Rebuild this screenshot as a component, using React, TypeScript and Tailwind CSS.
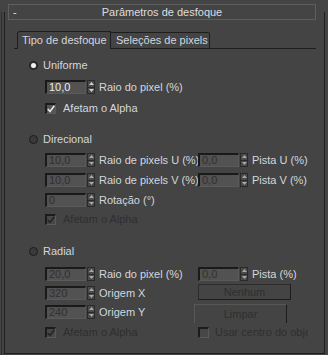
import React from "react";

const FONT = { fontFamily: '"Liberation Sans", Arial, sans-serif' };

function Spinner({ disabled }: { disabled?: boolean }) {
  const c = disabled ? "#a8a8a8" : "#d0d0d0";
  return (
    <div className="flex h-[14px] w-[8px] flex-col border border-[#2a2a2a] bg-[#4a4a4a]">
      <div className="flex flex-1 items-center justify-center border-b border-[#2a2a2a]">
        <svg width="5" height="3" viewBox="0 0 5 3">
          <polygon points="2.5,0 5,3 0,3" fill={c} />
        </svg>
      </div>
      <div className="flex flex-1 items-center justify-center">
        <svg width="5" height="3" viewBox="0 0 5 3">
          <polygon points="0,0 5,0 2.5,3" fill={c} />
        </svg>
      </div>
    </div>
  );
}

function Spin({ value, disabled }: { value: string; disabled?: boolean }) {
  return (
    <div className="flex items-center">
      <div
        className={
          "flex h-[14px] w-[41px] items-center border-t-2 border-l-2 border-r border-b border-t-[#1a1a1a] border-l-[#1a1a1a] border-r-[#5a5a5a] border-b-[#5a5a5a] bg-[#525252] pl-[2px] text-[11px] leading-none " +
          (disabled ? "text-[#303030]" : "text-[#ececec]")
        }
      >
        {value}
      </div>
      <div className="ml-[1px]">
        <Spinner disabled={disabled} />
      </div>
    </div>
  );
}

function Check({ disabled, checked = true }: { disabled?: boolean; checked?: boolean }) {
  return (
    <div
      className={
        "flex h-[11px] w-[11px] items-center justify-center border-t-2 border-l-2 border-r border-b border-t-[#1c1c1c] border-l-[#1c1c1c] border-r-[#5a5a5a] border-b-[#5a5a5a] " +
        (disabled ? "bg-[#474747]" : "bg-[#555555]")
      }
    >
      {checked && (
        <svg width="8" height="8" viewBox="0 0 8 8">
          <polyline
            points="0.8,4 3,6.5 7.3,0.8"
            fill="none"
            stroke={disabled ? "#262626" : "#e8e8e8"}
            strokeWidth="1.6"
          />
        </svg>
      )}
    </div>
  );
}

function Radio({ selected }: { selected?: boolean }) {
  return (
    <div className="flex h-[9px] w-[9px] items-center justify-center rounded-full border border-[#1c1c1c] bg-[#3a3a3a]">
      {selected && <div className="h-[5px] w-[5px] rounded-full bg-[#f0f0f0]" />}
    </div>
  );
}

const LBL = "text-[11px] leading-none text-[#d2d7de] whitespace-nowrap";
const DIS = "text-[11px] leading-none text-[#2f2f2f] whitespace-nowrap";

function SpinRow({ value, label, disabled }: { value: string; label: string; disabled?: boolean }) {
  return (
    <div className="flex h-[14px] items-center">
      <Spin value={value} disabled={disabled} />
      <span className={"ml-[4px] " + LBL}>{label}</span>
    </div>
  );
}

export default function App() {
  return (
    <div className="flex h-[355px] w-[328px] overflow-hidden bg-[#444444]" style={FONT}>
      <div className="ml-[1px] mt-[12px] h-[343px] w-[1px] bg-[#2e2e2e]" />
      <div className="ml-[2px] mt-[12px] flex h-[342px] w-[321px] flex-col border-l border-r border-b border-[#1e1e1e]">
        {/* header */}
        <div className="-mt-[8px] ml-[3px] flex h-[16px] w-[308px] items-center border border-[#5e5e5e] bg-[#444444]">
          <span className="w-[12px] pl-[4px] text-[11px] leading-none text-[#e0e0e0]">-</span>
          <span className="flex-1 text-center text-[11px] leading-none text-[#dedede]">Parâmetros de desfoque</span>
          <span className="w-[12px]" />
        </div>

        {/* tabs */}
        <div className="ml-[9px] mt-[11px] flex h-[18px] w-[302px] items-end">
          <div className="h-full w-[3px] border-b border-[#1e1e1e]" />
          <div className="flex h-[18px] w-[94px] items-center rounded-tl-[3px] border-l border-t border-r border-[#1e1e1e] pl-[4px]">
            <span className={LBL}>Tipo de desfoque</span>
          </div>
          <div className="flex h-[17px] w-[99px] items-center rounded-tr-[2px] border-t border-r border-b border-[#1e1e1e] pl-[5px]">
            <span className={LBL}>Seleções de pixels</span>
          </div>
          <div className="h-full flex-1 border-b border-[#1e1e1e]" />
        </div>

        {/* content */}
        <div className="ml-[24px] flex flex-col">
          {/* Uniforme */}
          <div className="mt-[9px] flex h-[14px] items-center">
            <Radio selected />
            <span className={"ml-[5px] " + LBL}>Uniforme</span>
          </div>
          <div className="mt-[8px] pl-[16px]">
            <SpinRow value="10,0" label="Raio do pixel (%)" />
          </div>
          <div className="mt-[8px] flex h-[12px] items-center pl-[16px]">
            <Check />
            <span className={"ml-[7px] " + LBL}>Afetam o Alpha</span>
          </div>

          {/* Direcional */}
          <div className="mt-[18px] flex h-[14px] items-center">
            <Radio />
            <span className={"ml-[5px] " + LBL}>Direcional</span>
          </div>
          <div className="mt-[7px] flex h-[14px] items-center pl-[16px]">
            <div className="w-[153px]">
              <SpinRow value="10,0" label="Raio de pixels U (%)" disabled />
            </div>
            <SpinRow value="0,0" label="Pista U (%)" disabled />
          </div>
          <div className="mt-[6px] flex h-[14px] items-center pl-[16px]">
            <div className="w-[153px]">
              <SpinRow value="10,0" label="Raio de pixels V (%)" disabled />
            </div>
            <SpinRow value="0,0" label="Pista V (%)" disabled />
          </div>
          <div className="mt-[6px] pl-[16px]">
            <SpinRow value="0" label="Rotação (°)" disabled />
          </div>
          <div className="mt-[6px] flex h-[12px] items-center pl-[16px]">
            <Check disabled />
            <span className={"ml-[7px] " + DIS}>Afetam o Alpha</span>
          </div>

          {/* Radial */}
          <div className="mt-[19px] flex h-[14px] items-center">
            <Radio />
            <span className={"ml-[5px] " + LBL}>Radial</span>
          </div>
          <div className="mt-[9px] flex pl-[16px]">
            <div className="flex w-[149px] flex-col">
              <SpinRow value="20,0" label="Raio do pixel (%)" disabled />
              <div className="mt-[5px]">
                <SpinRow value="320" label="Origem X" disabled />
              </div>
              <div className="mt-[5px]">
                <SpinRow value="240" label="Origem Y" disabled />
              </div>
              <div className="mt-[7px] flex h-[12px] items-center">
                <Check disabled />
                <span className={"ml-[7px] " + DIS}>Afetam o Alpha</span>
              </div>
            </div>
            <div className="flex flex-col">
              <div className="ml-[4px]">
                <SpinRow value="0,0" label="Pista (%)" disabled />
              </div>
              <div className="ml-[4px] mt-[3px] flex h-[16px] w-[93px] items-center justify-center border-t border-l border-t-[#2c2c2c] border-l-[#2c2c2c] border-r border-b border-r-[#1c1c1c] border-b-[#1c1c1c]">
                <span className={DIS}>Nenhum</span>
              </div>
              <div className="mt-[4px] flex h-[19px] w-[93px] items-center justify-center border-t border-l border-t-[#575757] border-l-[#575757] border-r border-r-[#1c1c1c]">
                <span className={DIS}>Limpar</span>
              </div>
              <div className="ml-[4px] mt-[3px] flex h-[12px] items-center">
                <Check disabled checked={false} />
                <span className={"ml-[6px] w-[93px] overflow-hidden " + DIS}>Usar centro do objeto</span>
              </div>
            </div>
          </div>
        </div>
      </div>
    </div>
  );
}
